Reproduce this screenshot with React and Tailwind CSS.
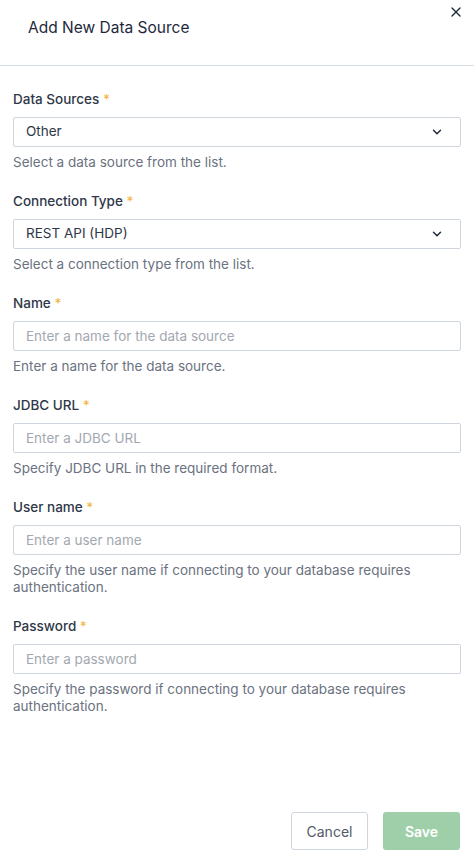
import { X, ChevronDown } from 'lucide-react';

const fields = [
  { label: 'Data Sources', type: 'select', value: 'Other', help: 'Select a data source from the list.' },
  { label: 'Connection Type', type: 'select', value: 'REST API (HDP)', help: 'Select a connection type from the list.' },
  { label: 'Name', placeholder: 'Enter a name for the data source', help: 'Enter a name for the data source.' },
  { label: 'JDBC URL', placeholder: 'Enter a JDBC URL', help: 'Specify JDBC URL in the required format.' },
  {
    label: 'User name',
    placeholder: 'Enter a user name',
    help: 'Specify the user name if connecting to your database requires authentication.',
  },
  {
    label: 'Password',
    placeholder: 'Enter a password',
    help: 'Specify the password if connecting to your database requires authentication.',
  },
];

function Field({ field }) {
  return (
    <div className="mb-[20px]">
      <label className="block h-[20px] text-[13.5px] leading-[20px] font-medium text-[#2f3848]">
        {field.label} <span className="text-[#f5b549]">*</span>
      </label>
      {field.type === 'select' ? (
        <div className="mt-[8px] flex h-[30px] items-center justify-between rounded-[2px] border border-[#cfd6de] pl-[12px] pr-[16px] text-[13.5px] text-[#2d3748]">
          <span>{field.value}</span>
          <ChevronDown size={14} strokeWidth={2.5} className="text-[#1f2937]" />
        </div>
      ) : (
        <input
          placeholder={field.placeholder}
          className="mt-[8px] block h-[30px] w-full rounded-[2px] border border-[#cfd6de] px-[12px] text-[13.5px] text-[#2d3748] placeholder:text-[#a3a8b0] focus:outline-none"
        />
      )}
      <p className="mt-[7px] text-[13.5px] leading-[17px] text-[#6b7280]">{field.help}</p>
    </div>
  );
}

export default function App() {
  return (
    <div
      className="flex h-[863px] w-[474px] flex-col bg-white"
      style={{ fontFamily: 'Inter, "Noto Sans", sans-serif' }}
    >
      <div className="relative h-[66px] border-b border-[#d5dde5]">
        <h1 className="pl-[28px] pt-[16px] text-[15.5px] leading-[24px] text-[#1e293b]">Add New Data Source</h1>
        <button className="absolute right-[10px] top-[4px] text-[#1e293b]">
          <X size={16} strokeWidth={2} />
        </button>
      </div>

      <div className="px-[13px] pt-[22.5px]">
        {fields.map((f) => (
          <Field key={f.label} field={f} />
        ))}
      </div>

      <div className="mt-auto flex justify-end gap-[15px] pb-[13px] pr-[14px]">
        <button className="h-[38px] w-[77px] rounded-[3px] border border-[#cfd6de] text-[14px] text-[#525a68]">
          Cancel
        </button>
        <button className="h-[38px] w-[77px] rounded-[3px] bg-[#9fcfa9] text-[14px] font-semibold text-white">
          Save
        </button>
      </div>
    </div>
  );
}
